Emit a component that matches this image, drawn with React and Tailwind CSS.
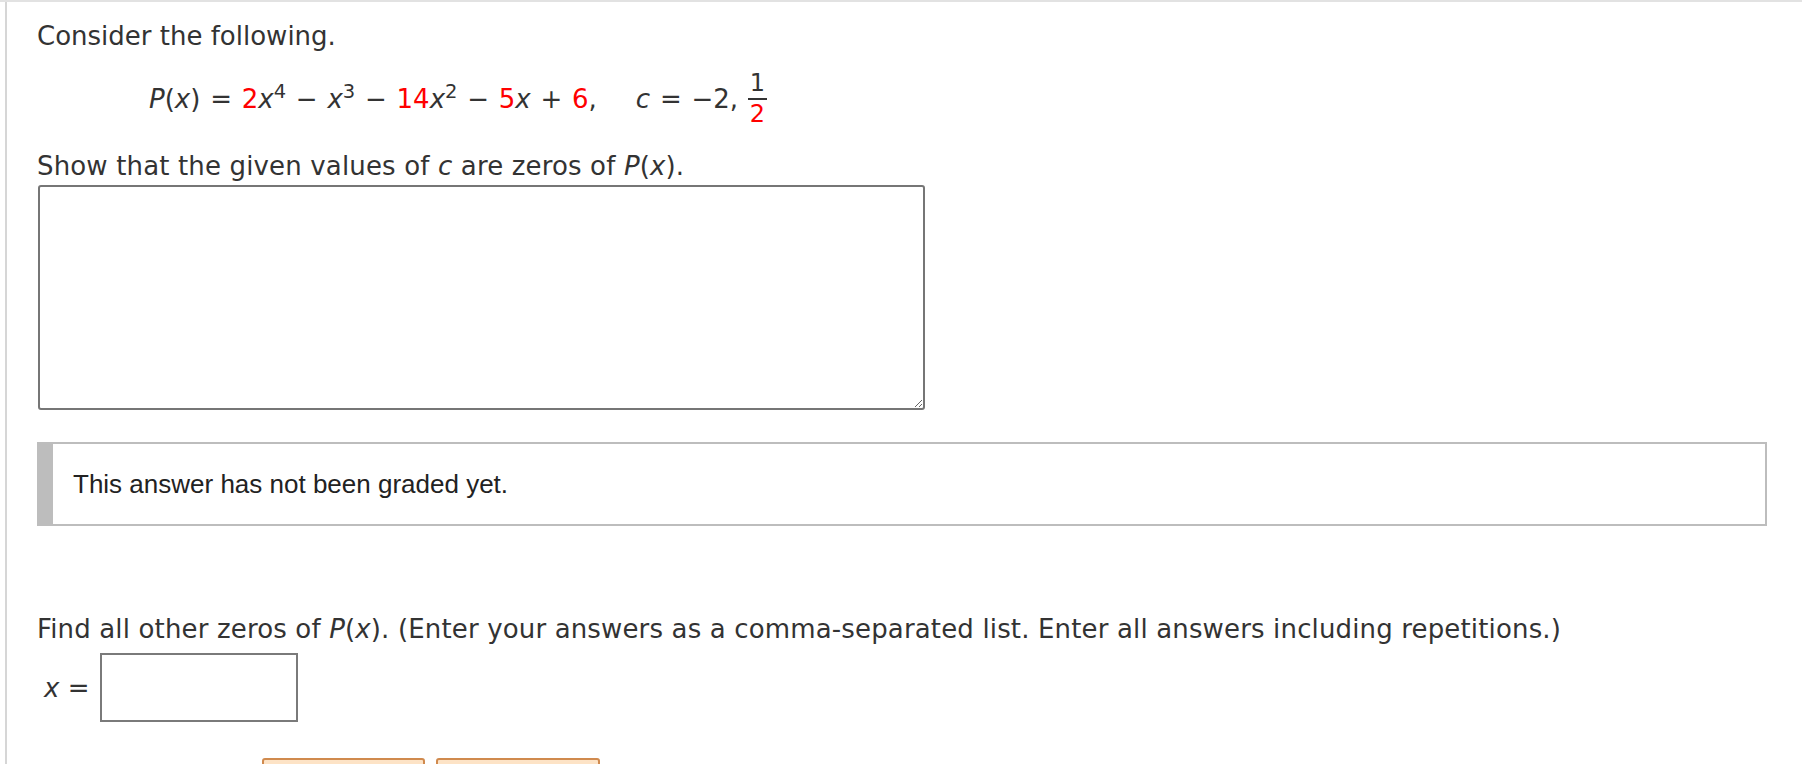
export default function App() {

  /* ================= HELPERS ================= */

  const red = "text-[#ff0000]";

  return (

    <div className="min-h-screen bg-white border-t-2 border-[#e2e2e2] font-['DejaVu_Sans',Verdana,sans-serif] text-[26px] text-[#333]">

      <div className="ml-[5px] min-h-[762px] border-l-2 border-[#d6d6d6] pl-[30px] pt-[17px]">

        {/* ================= INTRO ================= */}

        <p className="leading-[34px]">

          Consider the following.

        </p>

        {/* ================= FORMULA ================= */}

        <div className="mt-[17px] pl-[112px] leading-[34px] whitespace-nowrap [word-spacing:1.5px]">

          <span className="italic">P</span>(<span className="italic">x</span>)
          {" = "}
          <span className={red}>2</span>
          <span className="italic">x</span>
          <sup>4</sup>
          {" \u2212 "}
          <span className="italic">x</span>
          <sup>3</sup>
          {" \u2212 "}
          <span className={red}>14</span>
          <span className="italic">x</span>
          <sup>2</sup>
          {" \u2212 "}
          <span className={red}>5</span>
          <span className="italic">x</span>
          {" + "}
          <span className={red}>6</span>,

          <span className="ml-[39px]">

            <span className="italic">c</span>
            {" = \u22122, "}

          </span>

          <span className="inline-flex flex-col items-center align-middle text-[24px] relative -top-[2px]">

            <span className="leading-[30px] px-[2px]">1</span>

            <span className={`leading-[28px] border-t-2 border-[#333] px-[2px] ${red}`}>2</span>

          </span>

        </div>

        {/* ================= PART 1 ================= */}

        <p className="mt-[19px] leading-[34px] tracking-[0.15px]">

          Show that the given values of <span className="italic">c</span> are zeros of{" "}
          <span className="italic">P</span>(<span className="italic">x</span>).

        </p>

        <textarea
          className="block mt-[2px] ml-[1px] w-[887px] h-[225px] border-2 border-[#767676] rounded-[3px] bg-white outline-none"
        />

        {/* ================= GRADE STATUS ================= */}

        <div className="mt-[32px] w-[1730px] h-[84px] flex border-2 border-l-0 border-[#bdbdbd] bg-white">

          <div className="w-[16px] bg-[#bdbdbd]" />

          <div className="flex items-center pl-[20px] font-['Liberation_Sans',Arial,sans-serif] text-[26px] text-[#222]">

            This answer has not been graded yet.

          </div>

        </div>

        {/* ================= PART 2 ================= */}

        <p className="mt-[86px] leading-[34px] whitespace-nowrap tracking-[0.15px]">

          Find all other zeros of <span className="italic">P</span>(<span className="italic">x</span>).
          (Enter your answers as a comma-separated list. Enter all answers including repetitions.)

        </p>

        <div className="mt-[7px] flex items-center">

          <span className="ml-[7px] w-[56px] leading-[34px]">

            <span className="italic">x</span> =

          </span>

          <input
            type="text"
            className="w-[198px] h-[69px] border-2 border-[#7a7a7a] bg-white outline-none"
          />

        </div>

        {/* ================= BUTTONS ================= */}

        <div className="mt-[36px] ml-[225px] flex gap-[11px]">

          <div className="w-[163px] h-[40px] border-2 border-[#d08a4e] rounded-[3px] bg-[#fde3c6]" />

          <div className="w-[164px] h-[40px] border-2 border-[#d08a4e] rounded-[3px] bg-[#fde3c6]" />

        </div>

      </div>

    </div>
  );
}
